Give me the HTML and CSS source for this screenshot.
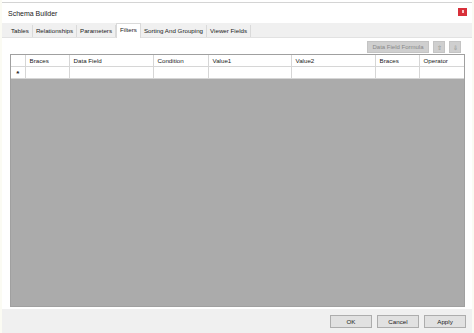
FILE: index.html
```html
<!DOCTYPE html>
<html lang="en">
<head>
  <meta charset="UTF-8" />
  <title>Schema Builder</title>
  <link rel="stylesheet" href="styles.css">
</head>
<body>
  <div class="window">
    <div class="titlebar">
      <span class="title">Schema Builder</span>
      <span class="close"><i></i></span>
    </div>

    <div class="tabs">
      <div class="tab">Tables</div>
      <div class="tab">Relationships</div>
      <div class="tab">Parameters</div>
      <div class="tab active">Filters</div>
      <div class="tab">Sorting And Grouping</div>
      <div class="tab">Viewer Fields</div>
    </div>

    <div class="panel">
      <div class="toolbar">
        <button class="btn-formula">Data Field Formula</button>
        <button class="btn-arrow">&#8679;</button>
        <button class="btn-arrow">&#8681;</button>
      </div>

      <div class="grid">
        <table>
          <colgroup>
            <col class="w-row">
            <col class="w-braces">
            <col class="w-field">
            <col class="w-cond">
            <col class="w-val1">
            <col class="w-val2">
            <col class="w-braces">
            <col>
          </colgroup>
          <thead>
            <tr>
              <th class="rowhead"></th>
              <th>Braces</th>
              <th>Data Field</th>
              <th>Condition</th>
              <th>Value1</th>
              <th>Value2</th>
              <th>Braces</th>
              <th>Operator</th>
            </tr>
          </thead>
          <tbody>
            <tr>
              <td class="rowhead new">*</td>
              <td></td><td></td><td></td><td></td><td></td><td></td><td></td>
            </tr>
          </tbody>
        </table>
      </div>
    </div>

    <div class="footer">
      <button>OK</button>
      <button>Cancel</button>
      <button>Apply</button>
    </div>
  </div>
</body>
</html>
```

FILE: styles.css
```css
html, body {
  margin: 0;
  padding: 0;
  background-color: #fbfbf3;
}
.window {
  width: 470px;
  height: 333px;
  margin: 0 2px;
  display: flex;
  flex-direction: column;
  font-family: "Liberation Sans", Arial, sans-serif;
  color: #1a1a1a;
  background-color: #fff;
}
.titlebar {
  margin-top: 2px;
  height: 20px;
  border-top: 1px solid #d4d4d4;
  display: flex;
  align-items: center;
  justify-content: space-between;
  padding: 0 5px 0 6px;
}
.title {
  font-size: 7px;
  margin-top: 1px;
}
.close {
  width: 9px;
  height: 8px;
  background-color: #d8303a;
  display: flex;
  align-items: center;
  justify-content: center;
  margin-top: -3px;
}
.close i {
  width: 2px;
  height: 3px;
  background-color: #f6c6c8;
}
.tabs {
  height: 14px;
  background-color: #f0f0f0;
  display: flex;
  align-items: flex-end;
  padding-left: 6px;
  border-bottom: 1px solid #e2e2e2;
}
.tab {
  font-size: 6.2px;
  height: 12px;
  line-height: 12px;
  padding: 0 3px;
  border-right: 1px solid #dadada;
  color: #222;
}
.tab.active {
  background-color: #fff;
  height: 14px;
  line-height: 12px;
  border: 1px solid #dadada;
  border-bottom: none;
  margin-bottom: -1px;
}
.panel {
  flex: 1;
  display: flex;
  flex-direction: column;
  padding: 3px 5px 2px 8px;
  background-color: #fff;
}
.toolbar {
  display: flex;
  justify-content: flex-end;
  gap: 4px;
  height: 12px;
  margin-bottom: 1px;
  padding-right: 6px;
}
.toolbar button {
  font-family: inherit;
  font-size: 6px;
  color: #888;
  background-color: #cfcfcf;
  border: 1px solid #c4c4c4;
  padding: 0;
  height: 12px;
}
.btn-formula {
  width: 62px;
}
.btn-arrow {
  width: 12px;
}
.grid {
  flex: 1;
  background-color: #ababab;
  border: 1px solid #a0a0a0;
  margin-right: 2px;
}
table {
  width: 100%;
  border-collapse: collapse;
  background-color: #fff;
  table-layout: fixed;
}
.w-row { width: 14px; }
.w-braces { width: 44px; }
.w-field { width: 84px; }
.w-cond { width: 55px; }
.w-val1 { width: 83px; }
.w-val2 { width: 84px; }
th, td {
  font-size: 6.2px;
  font-weight: normal;
  text-align: left;
  height: 11px;
  line-height: 9px;
  padding: 0 4px;
  border: 1px solid #d6d6d6;
  color: #1a1a1a;
  overflow: hidden;
  white-space: nowrap;
}
tr > :first-child {
  border-left: none;
}
tr > :last-child {
  border-right: none;
}
thead th {
  border-top: none;
}
.rowhead {
  padding: 0;
  text-align: center;
}
.rowhead.new {
  font-size: 8px;
  font-weight: bold;
  line-height: 9px;
  vertical-align: bottom;
}
.footer {
  height: 24px;
  background-color: #f0f0f0;
  display: flex;
  justify-content: flex-end;
  align-items: center;
  gap: 5px;
  padding-right: 6px;
}
.footer button {
  font-family: inherit;
  font-size: 6.2px;
  color: #1a1a1a;
  width: 42px;
  height: 13px;
  padding: 0;
  background-color: #e1e1e1;
  border: 1px solid #adadad;
}
```
